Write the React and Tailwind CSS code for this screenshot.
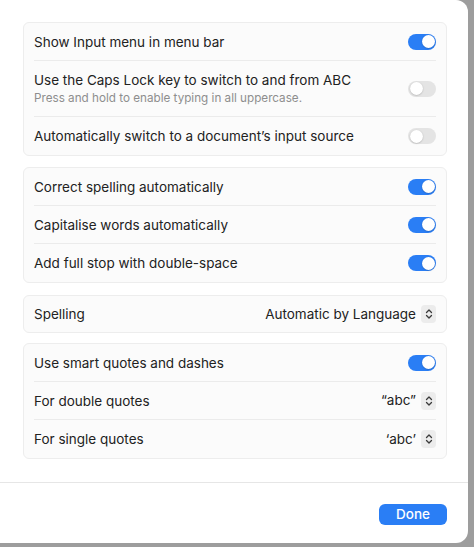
import React from "react";

function Toggle({ on }) {
  return (
    <div
      className={`relative w-[28px] h-[16px] rounded-full shrink-0 ${
        on ? "bg-[#2a7ef5]" : "bg-[#e4e4e4]"
      }`}
    >
      <div
        className={`absolute top-[1.5px] w-[13px] h-[13px] rounded-full bg-white shadow-[0_0.5px_1.5px_rgba(0,0,0,0.25)] ${
          on ? "right-[1.5px]" : "left-[1.5px]"
        }`}
      />
    </div>
  );
}

function Stepper() {
  return (
    <div className="w-[15px] h-[18px] rounded-[4px] bg-[#ececec] flex items-center justify-center ml-[5px]">
      <svg width="8" height="12" viewBox="0 0 8 12" fill="none">
        <path d="M1.5 4.5 L4 2 L6.5 4.5" stroke="#3a3a3a" strokeWidth="1.3" strokeLinecap="round" strokeLinejoin="round" />
        <path d="M1.5 7.5 L4 10 L6.5 7.5" stroke="#3a3a3a" strokeWidth="1.3" strokeLinecap="round" strokeLinejoin="round" />
      </svg>
    </div>
  );
}

function Row({ label, sub, right, last, h = "h-[38px]" }) {
  return (
    <div className="px-[10px]">
      <div
        className={`flex items-center justify-between ${sub ? "h-[56px]" : h} ${
          last ? "" : "border-b border-[#ebebeb]"
        }`}
      >
        <div className="flex flex-col">
          <span className="text-[13.5px] text-[#222222] leading-[16px]">{label}</span>
          {sub && (
            <span className="text-[11.7px] text-[#8e8e8e] leading-[14px] mt-[3px]">{sub}</span>
          )}
        </div>
        {right}
      </div>
    </div>
  );
}

function Group({ children, className = "" }) {
  return (
    <div className={`rounded-[6px] border border-[#ededed] bg-[#fbfbfb] ${className}`}>
      {children}
    </div>
  );
}

function Value({ children }) {
  return (
    <div className="flex items-center text-[13.5px] text-[#222222]">
      {children}
      <Stepper />
    </div>
  );
}

export default function App() {
  return (
    <div
      className="w-[474px] h-[547px] bg-[#9d9d9d] overflow-hidden"
      style={{ fontFamily: "Inter, 'Noto Sans', sans-serif" }}
    >
      <div className="w-[468px] h-[543px] bg-white rounded-tr-[12px] rounded-br-[12px] flex flex-col">
        <div className="pt-[22px] pl-[23px] pr-[21px] flex flex-col">
          <Group>
            <Row label="Show Input menu in menu bar" right={<Toggle on />} />
            <Row
              label="Use the Caps Lock key to switch to and from ABC"
              sub="Press and hold to enable typing in all uppercase."
              right={<Toggle />}
            />
            <Row label="Automatically switch to a document’s input source" right={<Toggle />} last />
          </Group>
          <Group className="mt-[11px]">
            <Row label="Correct spelling automatically" right={<Toggle on />} />
            <Row label="Capitalise words automatically" right={<Toggle on />} />
            <Row label="Add full stop with double-space" right={<Toggle on />} last />
          </Group>
          <Group className="mt-[12px]">
            <Row label="Spelling" right={<Value>Automatic by Language</Value>} h="h-[36px]" last />
          </Group>
          <Group className="mt-[10px]">
            <Row label="Use smart quotes and dashes" right={<Toggle on />} />
            <Row label="For double quotes" right={<Value>“abc”</Value>} />
            <Row label="For single quotes" right={<Value>‘abc’</Value>} last />
          </Group>
        </div>
        <div className="mt-[23px] border-t border-[#e6e6e6]" />
        <div className="flex justify-end pr-[21px] pt-[21px]">
          <button className="w-[68px] h-[21px] rounded-[6px] bg-[#2a7ef5] text-white text-[13.5px] font-medium leading-none">
            Done
          </button>
        </div>
      </div>
    </div>
  );
}
